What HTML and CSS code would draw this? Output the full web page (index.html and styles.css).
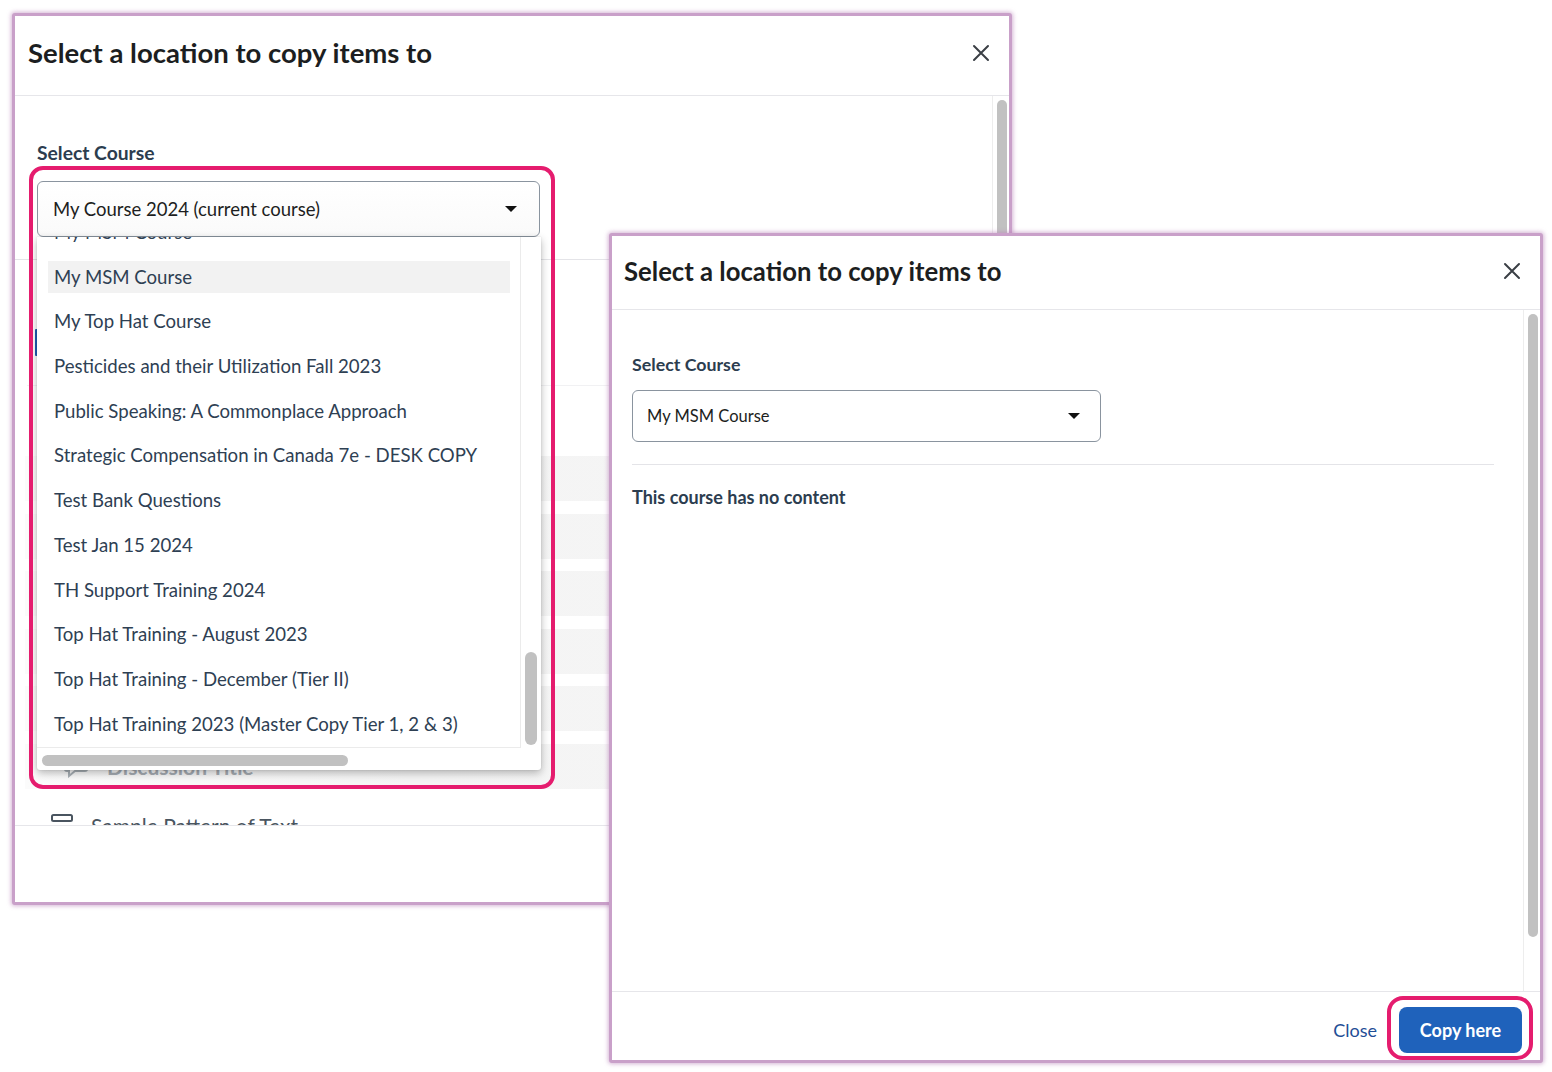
FILE: index.html
```html
<!DOCTYPE html>
<html lang="en">
<head>
  <meta charset="UTF-8" />
  <meta name="viewport" content="width=device-width, initial-scale=1.0" />
  <title>Select a location to copy items to</title>
  <link rel="stylesheet" href="styles.css">
</head>
<body>
  <div class="canvas">

    <!-- back dialog: course dropdown open -->
    <div class="dialog dialog-back">
      <div class="dialog-header">
        <h2>Select a location to copy items to</h2>
        <button class="close-x" aria-label="Close">
          <svg width="20" height="20" viewBox="0 0 20 20"><path d="M3 3 L17 17 M17 3 L3 17" stroke="#3a3f45" stroke-width="2" stroke-linecap="round"/></svg>
        </button>
      </div>
      <div class="dialog-body">
        <div class="body-content">
          <label class="field-label">Select Course</label>
          <div class="select select-lg">
            <span>My Course 2024 (current course)</span>
            <span class="caret"></span>
          </div>
          <div class="tab-line"></div>
          <div class="picked-row"></div>
          <div class="thin-line"></div>
          <div class="item-rows">
            <div class="item-row"></div>
            <div class="item-row"></div>
            <div class="item-row"></div>
            <div class="item-row"></div>
            <div class="item-row"></div>
            <div class="item-row">
              <svg class="row-icon" width="26" height="24" viewBox="0 0 26 24"><path d="M4 3 H22 Q24 3 24 5 V15 Q24 17 22 17 H12 L6 22 V17 H4 Q2 17 2 15 V5 Q2 3 4 3 Z" fill="none" stroke="#a9b0b6" stroke-width="2"/></svg>
              <span>Discussion Title</span>
            </div>
            <div class="item-row plain">
              <svg class="row-icon small" width="22" height="20" viewBox="0 0 22 20"><rect x="1" y="1" width="20" height="6" rx="1.5" fill="none" stroke="#4a5560" stroke-width="2"/></svg>
              <span class="dark">Sample Pattern of Text</span>
            </div>
          </div>
        </div>
        <div class="scroll-track">
          <div class="scroll-thumb back-thumb"></div>
        </div>
      </div>
      <div class="dialog-footer back-footer"></div>

      <div class="dropdown">
        <div class="dropdown-main">
          <ul class="options">
            <li>My MSM Course</li>
            <li class="hover">My MSM Course</li>
            <li>My Top Hat Course</li>
            <li>Pesticides and their Utilization Fall 2023</li>
            <li>Public Speaking: A Commonplace Approach</li>
            <li>Strategic Compensation in Canada 7e - DESK COPY</li>
            <li>Test Bank Questions</li>
            <li>Test Jan 15 2024</li>
            <li>TH Support Training 2024</li>
            <li>Top Hat Training - August 2023</li>
            <li>Top Hat Training - December (Tier II)</li>
            <li>Top Hat Training 2023 (Master Copy Tier 1, 2 &amp; 3)</li>
          </ul>
          <div class="v-track"><div class="v-thumb"></div></div>
        </div>
        <div class="h-track"><div class="h-thumb"></div></div>
      </div>
    </div>
    <div class="highlight highlight-select"></div>

    <!-- front dialog: course chosen -->
    <div class="dialog dialog-front">
      <div class="dialog-header">
        <h2>Select a location to copy items to</h2>
        <button class="close-x" aria-label="Close">
          <svg width="20" height="20" viewBox="0 0 20 20"><path d="M3 3 L17 17 M17 3 L3 17" stroke="#3a3f45" stroke-width="2" stroke-linecap="round"/></svg>
        </button>
      </div>
      <div class="dialog-body">
        <div class="body-content front-content">
          <label class="field-label">Select Course</label>
          <div class="select select-md">
            <span>My MSM Course</span>
            <span class="caret"></span>
          </div>
          <hr class="divider">
          <p class="empty-note">This course has no content</p>
        </div>
        <div class="scroll-track">
          <div class="scroll-thumb front-thumb"></div>
        </div>
      </div>
      <div class="dialog-footer">
        <a class="link-btn" href="#">Close</a>
        <button class="primary-btn">Copy here</button>
      </div>
    </div>
    <div class="highlight highlight-button"></div>

  </div>
</body>
</html>
```

FILE: styles.css
```css
* {
  box-sizing: border-box;
}
body {
  margin: 0;
  background: #fff;
  font-family: Lato, 'Noto Sans', sans-serif;
  color: #2c3d4f;
}
.canvas {
  position: relative;
  width: 1552px;
  height: 1072px;
  overflow: hidden;
}

/* dialogs */
.dialog {
  position: absolute;
  display: flex;
  flex-direction: column;
  background: #fff;
  border: 3px solid #c9a0c9;
  border-radius: 3px;
  box-shadow: 0 0 4px 1px rgba(185, 130, 185, 0.6);
}
.dialog-back {
  left: 12px;
  top: 13px;
  width: 1000px;
  height: 892px;
}
.dialog-front {
  left: 609px;
  top: 233px;
  width: 934px;
  height: 830px;
}
.dialog-header {
  display: flex;
  align-items: center;
  justify-content: space-between;
  border-bottom: 1px solid #e6e6ea;
  flex-shrink: 0;
}
.dialog-back .dialog-header {
  height: 80px;
  padding: 0 18px 6px 13px;
}
.dialog-front .dialog-header {
  height: 74px;
  padding: 0 18px 4px 12px;
}
.dialog-header h2 {
  margin: 0;
  font-weight: 700;
  color: #1c1e21;
}
.dialog-back .dialog-header h2 {
  font-size: 27.5px;
}
.dialog-front .dialog-header h2 {
  font-size: 25.7px;
}
.close-x {
  border: none;
  background: none;
  padding: 0;
  width: 20px;
  height: 20px;
  cursor: pointer;
}
.close-x svg {
  display: block;
}
.dialog-body {
  flex: 1;
  display: flex;
  min-height: 0;
  overflow: hidden;
}
.body-content {
  flex: 1;
  padding: 45px 0 0 22px;
  overflow: hidden;
}
.scroll-track {
  width: 17px;
  border-left: 1px solid #ededed;
  padding: 4px 2px 0 4px;
  flex-shrink: 0;
}
.scroll-thumb {
  background: #c1c1c1;
  border-radius: 6px;
  width: 10px;
}
.back-thumb {
  height: 600px;
}
.front-thumb {
  height: 623px;
}
.dialog-footer {
  border-top: 1px solid #e6e6ea;
  flex-shrink: 0;
}
.back-footer {
  height: 77px;
}

/* form bits */
.field-label {
  display: block;
  font-weight: 700;
  font-size: 19.3px;
  line-height: 24px;
  color: #2c3d4f;
  margin-bottom: 16px;
}
.select {
  display: flex;
  align-items: center;
  justify-content: space-between;
  border: 1px solid #8a949f;
  border-radius: 6px;
  color: #1c1e21;
  background: #fff;
}
.select-lg {
  width: 503px;
  height: 56px;
  padding: 0 22px 0 15px;
  font-size: 18.5px;
  background: linear-gradient(#fff, #fafafa);
}
.select-md {
  width: 469px;
  height: 52px;
  padding: 0 20px 0 14px;
  font-size: 16.5px;
}
.caret {
  width: 0;
  height: 0;
  border-left: 6px solid transparent;
  border-right: 6px solid transparent;
  border-top: 6px solid #111;
}

/* faded content of the back dialog */
.tab-line {
  height: 23px;
  border-bottom: 1px solid #e4e4e8;
  margin-left: -22px;
}
.picked-row {
  width: 4px;
  height: 27px;
  margin: 69px 0 0 -2px;
  background: #1f5fb5;
  border-radius: 1px;
}
.thin-line {
  height: 1px;
  margin: 29px 0 0 -10px;
  background: #f1f1f3;
}
.item-rows {
  display: flex;
  flex-direction: column;
  gap: 12.6px;
  margin: 70px 0 0 -12px;
}
.item-row {
  display: flex;
  align-items: center;
  gap: 18px;
  height: 45px;
  padding-left: 38px;
  background: linear-gradient(to right, #fbfbfb, #f4f4f4 40%, #f6f6f6);
  font-weight: 700;
  font-size: 21px;
  color: #a6adb4;
}
.item-row.plain {
  background: none;
  align-items: flex-start;
  padding-top: 12px;
}
.item-row .dark {
  color: #4a5560;
  font-weight: 400;
  line-height: 24px;
}
.row-icon.small {
  margin-left: -12px;
}

/* dropdown menu */
.dropdown {
  position: absolute;
  left: 22px;
  top: 221px;
  width: 504px;
  height: 533px;
  background: #fff;
  box-shadow: 0 3px 8px rgba(0, 0, 0, 0.28), 0 0 2px rgba(0, 0, 0, 0.12);
  border-radius: 0 0 3px 3px;
  display: flex;
  flex-direction: column;
}
.dropdown-main {
  flex: 1;
  display: flex;
  min-height: 0;
}
.options {
  flex: 1;
  list-style: none;
  margin: 0;
  padding: 0 10px 0 11px;
  overflow: hidden;
  border-right: 1px solid #ebebeb;
  border-bottom: 1px solid #ebebeb;
  display: flex;
  flex-direction: column;
  gap: 12.7px;
}
.options li {
  flex-shrink: 0;
  height: 32px;
  line-height: 32px;
  padding-left: 6px;
  font-size: 18.6px;
  color: #2e4053;
  white-space: nowrap;
}
.options li:first-child {
  margin-top: -21px;
}
.options li.hover {
  background: #f2f2f2;
}
.v-track {
  width: 20px;
  padding: 415px 4px 0 4px;
}
.v-thumb {
  height: 93px;
  background: #c1c1c1;
  border-radius: 6px;
}
.h-track {
  height: 22px;
  padding: 7px 0 0 5px;
}
.h-thumb {
  width: 306px;
  height: 11px;
  background: #c1c1c1;
  border-radius: 6px;
}

/* front dialog bits */
.front-content {
  padding: 43px 29px 0 20px;
}
.front-content .field-label {
  font-size: 17.8px;
  line-height: 22px;
  margin-bottom: 15px;
}
.divider {
  border: none;
  border-top: 1px solid #e4e4e8;
  margin: 22px 0 0;
}
.empty-note {
  margin: 21px 0 0;
  font-size: 18px;
  line-height: 22px;
  font-weight: 700;
  color: #2c3d4f;
}
.dialog-front .dialog-footer {
  height: 69px;
  display: flex;
  align-items: flex-start;
  justify-content: flex-end;
  gap: 22px;
  padding: 15px 18px 0 0;
}
.link-btn {
  font-size: 18px;
  line-height: 46px;
  color: #1f4e96;
  text-decoration: none;
}
.primary-btn {
  width: 123px;
  height: 46px;
  border: none;
  border-radius: 8px;
  background: #1f62bb;
  color: #fff;
  font-family: inherit;
  font-size: 18px;
  font-weight: 700;
  cursor: pointer;
}

/* callout outlines */
.highlight {
  position: absolute;
  border: 4px solid #e51c6e;
  pointer-events: none;
}
.highlight-select {
  left: 29px;
  top: 166px;
  width: 526px;
  height: 623px;
  border-radius: 14px;
}
.highlight-button {
  left: 1387px;
  top: 996px;
  width: 146px;
  height: 64px;
  border-radius: 16px;
}
```
